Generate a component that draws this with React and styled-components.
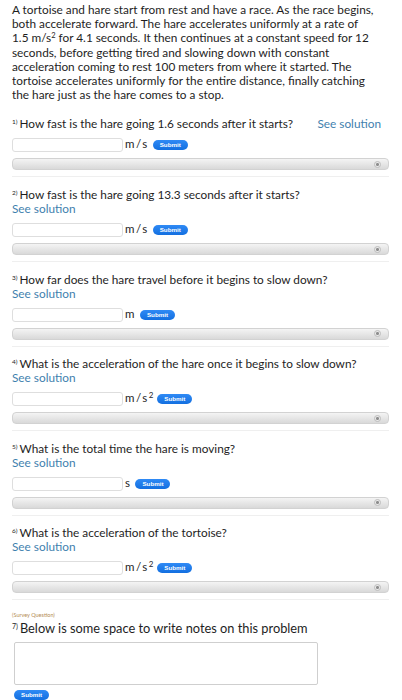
import { styled, createGlobalStyle } from "styled-components";

const GlobalStyle = createGlobalStyle`
  html, body {
    margin: 0;
    padding: 0;
    background: #fff;
  }
  body {
    font-family: Lato, "Open Sans", sans-serif;
    color: #1e1e1e;
  }
`;

const Page = styled.div`
  padding: 3px 13px 0 12px;
  width: 402px;
  box-sizing: border-box;
`;

const Intro = styled.p`
  margin: 0;
  font-size: 11.8px;
  line-height: 14.2px;
  white-space: nowrap;
`;

const Sup = styled.span`
  font-size: ${(p) => p.$size || "8px"};
  line-height: 0;
  vertical-align: ${(p) => p.$lift || "4px"};
  letter-spacing: 0;
  margin-right: ${(p) => p.$gap || "0"};
`;

const Block = styled.div`
  margin-top: ${(p) => (p.$first ? "15px" : "10.6px")};
`;

const QuestionLine = styled.div`
  display: flex;
  justify-content: space-between;
  align-items: baseline;
  font-size: 11.8px;
  line-height: 14px;
  height: 14px;
  padding-right: 8px;
`;

const SeeSolution = styled.a`
  display: block;
  color: #3f7fae;
  font-size: 11.8px;
  line-height: 14px;
  height: 14px;
  text-decoration: none;
  cursor: pointer;
`;

const InputRow = styled.div`
  display: flex;
  align-items: center;
  margin-top: 7px;
  height: 14px;
`;

const AnswerInput = styled.input`
  box-sizing: border-box;
  width: 111px;
  height: 14px;
  border: 1px solid #dedede;
  border-radius: 3px;
  padding: 0 3px;
  margin: 0;
  background: #fff;
`;

const Unit = styled.span`
  align-self: flex-start;
  font-size: 11.5px;
  letter-spacing: 1.5px;
  margin-left: 2px;
  line-height: 11px;
`;

const SubmitButton = styled.button`
  margin-left: 4px;
  height: 10px;
  padding: 0 7px;
  border: none;
  border-radius: 6px;
  background: linear-gradient(#2f8af5, #136fe0);
  color: #fff;
  font-family: "Liberation Sans", Arial, sans-serif;
  font-weight: bold;
  font-size: 6.2px;
  line-height: 10px;
  cursor: pointer;
`;

const AnswerBar = styled.div`
  margin-top: 6px;
  height: 12px;
  box-sizing: border-box;
  border: 1px solid #d2d2d2;
  border-radius: 4px;
  background: linear-gradient(#f4f4f4, #d9d9d9);
  display: flex;
  align-items: center;
  justify-content: flex-end;
  padding-right: 7px;
`;

const ToggleDot = styled.span`
  width: 7px;
  height: 7px;
  border-radius: 50%;
  background: radial-gradient(circle, #8d8d8d 0 1.3px, #e9e9e9 1.6px);
  border: 1px solid #bdbdbd;
  box-sizing: border-box;
`;

const Separator = styled.div`
  margin-top: 6px;
  height: 1px;
  background: #efefef;
`;

const SurveyLabel = styled.div`
  margin-top: 12px;
  font-size: 5.5px;
  line-height: 7px;
  color: #b48c55;
`;

const SurveyQuestion = styled.div`
  font-size: 12.8px;
  line-height: 15px;
  margin-top: 2px;
`;

const NotesArea = styled.textarea`
  display: block;
  box-sizing: border-box;
  margin: 6px 0 0 2px;
  width: 304px;
  height: 43px;
  border: 1px solid #cfcfcf;
  border-radius: 2px;
  resize: none;
`;

const FinalSubmit = styled(SubmitButton)`
  display: block;
  margin: 5px 0 0 2px;
`;

const questions = [
  { q: "How fast is the hare going 1.6 seconds after it starts?", unit: "m/s", inline: true },
  { q: "How fast is the hare going 13.3 seconds after it starts?", unit: "m/s" },
  { q: "How far does the hare travel before it begins to slow down?", unit: "m" },
  { q: "What is the acceleration of the hare once it begins to slow down?", unit: "m/s", sq: true },
  { q: "What is the total time the hare is moving?", unit: "s" },
  { q: "What is the acceleration of the tortoise?", unit: "m/s", sq: true },
];

const Question = ({ index, item }) => (
  <Block $first={index === 0}>
    <QuestionLine>
      <span>
        <Sup $size="6.5px" $gap="2px">{index + 1})</Sup>
        {item.q}
      </span>
      {item.inline && <SeeSolution as="span">See solution</SeeSolution>}
    </QuestionLine>
    {!item.inline && <SeeSolution>See solution</SeeSolution>}
    <InputRow>
      <AnswerInput type="text" />
      <Unit>
        {item.unit}
        {item.sq && <Sup>2</Sup>}
      </Unit>
      <SubmitButton>Submit</SubmitButton>
    </InputRow>
    <AnswerBar>
      <ToggleDot />
    </AnswerBar>
    <Separator />
  </Block>
);

export default function App() {
  return (
    <Page>
      <GlobalStyle />
      <Intro>
        A tortoise and hare start from rest and have a race. As the race begins,
        <br />
        both accelerate forward. The hare accelerates uniformly at a rate of
        <br />
        1.5 m/s<Sup $size="7.5px">2</Sup> for 4.1 seconds. It then continues at a constant speed for 12
        <br />
        seconds, before getting tired and slowing down with constant
        <br />
        acceleration coming to rest 100 meters from where it started. The
        <br />
        tortoise accelerates uniformly for the entire distance, finally catching
        <br />
        the hare just as the hare comes to a stop.
      </Intro>
      {questions.map((item, i) => (
        <Question key={i} index={i} item={item} />
      ))}
      <SurveyLabel>(Survey Question)</SurveyLabel>
      <SurveyQuestion>
        <Sup $size="7px" $gap="2px">7)</Sup>Below is some space to write notes on this problem
      </SurveyQuestion>
      <NotesArea />
      <FinalSubmit>Submit</FinalSubmit>
    </Page>
  );
}
